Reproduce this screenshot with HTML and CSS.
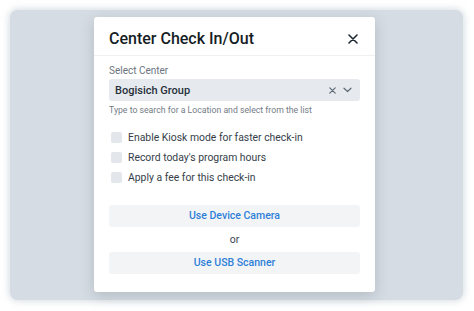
FILE: index.html
```html
<!DOCTYPE html>
<html lang="en">
  <head>
    <meta charset="UTF-8" />
    <title>Center Check In/Out</title>
    <link rel="stylesheet" href="styles.css">
  </head>
  <body>
    <div class="backdrop">
      <div class="modal">
        <div class="modal-header">
          <h1 class="modal-title">Center Check In/Out</h1>
          <span class="modal-close">
            <svg width="10" height="10" viewBox="0 0 10 10">
              <path d="M1 1L9 9M9 1L1 9" stroke="#1f2933" stroke-width="1.6" stroke-linecap="round" />
            </svg>
          </span>
        </div>

        <div class="modal-body">
          <label class="field-label">Select Center</label>
          <div class="select">
            <span class="select-value">Bogisich Group</span>
            <span class="select-icons">
              <svg width="7" height="7" viewBox="0 0 7 7">
                <path d="M0.8 0.8L6.2 6.2M6.2 0.8L0.8 6.2" stroke="#5f6b78" stroke-width="1.2" stroke-linecap="round" />
              </svg>
              <svg width="9" height="6" viewBox="0 0 9 6">
                <path d="M1 1.2L4.5 4.5L8 1.2" fill="none" stroke="#5f6b78" stroke-width="1.2" stroke-linecap="round" stroke-linejoin="round" />
              </svg>
            </span>
          </div>
          <p class="field-help">Type to search for a Location and select from the list</p>

          <div class="options">
            <label class="option"><span class="checkbox"></span>Enable Kiosk mode for faster check-in</label>
            <label class="option"><span class="checkbox"></span>Record today's program hours</label>
            <label class="option"><span class="checkbox"></span>Apply a fee for this check-in</label>
          </div>

          <div class="actions">
            <span class="btn">Use Device Camera</span>
            <span class="or">or</span>
            <span class="btn">Use USB Scanner</span>
          </div>
        </div>
      </div>
    </div>
  </body>
</html>
```

FILE: styles.css
```css
* {
  margin: 0;
  padding: 0;
  box-sizing: border-box;
  font-family: Roboto, "Noto Sans", sans-serif;
}

html,
body {
  height: 100%;
  background: #ffffff;
}

.backdrop {
  display: flex;
  justify-content: flex-start;
  align-items: flex-start;
  height: 290px;
  margin: 10px 11px 0 10px;
  padding: 7px 0 0 84px;
  background: #d5dce3;
  border-radius: 8px;
  box-shadow: 0 0 6px 2px rgba(200, 208, 216, 0.6);
}

.modal {
  width: 281px;
  height: 275px;
  background: #ffffff;
  border-radius: 3px;
  box-shadow: 0 4px 14px rgba(60, 72, 88, 0.22);
}

.modal-header {
  display: flex;
  justify-content: space-between;
  align-items: center;
  height: 39px;
  padding: 5px 17px 0 15px;
  border-bottom: 1px solid #eef0f3;
}

.modal-title {
  font-size: 16px;
  font-weight: 500;
  line-height: 22px;
  color: #161d25;
}

.modal-close {
  display: flex;
}

.modal-body {
  padding: 8px 15px 0;
}

.field-label {
  display: block;
  font-size: 10px;
  line-height: 14px;
  color: #6b7580;
}

.select {
  display: flex;
  justify-content: space-between;
  align-items: center;
  height: 22px;
  margin-top: 1px;
  padding: 0 8px 0 6px;
  background: #e6e9ed;
  border-radius: 3px;
}

.select-value {
  font-size: 11px;
  font-weight: 500;
  color: #26303b;
}

.select-icons {
  display: flex;
  align-items: center;
  gap: 7px;
}

.field-help {
  margin-top: 2px;
  font-size: 8.7px;
  line-height: 14px;
  color: #737c86;
}

.options {
  margin-top: 10px;
}

.option {
  display: flex;
  align-items: center;
  height: 20px;
  font-size: 10.4px;
  color: #353e49;
}

.checkbox {
  width: 11px;
  height: 11px;
  margin: 0 6px 0 2px;
  background: #e3e6ea;
  border-radius: 2px;
}

.actions {
  display: flex;
  flex-direction: column;
  margin-top: 18px;
}

.btn {
  height: 22px;
  line-height: 22px;
  text-align: center;
  font-size: 10.5px;
  font-weight: 500;
  color: #2f7fd8;
  background: #f2f4f6;
  border-radius: 3px;
}

.or {
  height: 25px;
  line-height: 25px;
  text-align: center;
  font-size: 10.5px;
  color: #3c4550;
}
```
